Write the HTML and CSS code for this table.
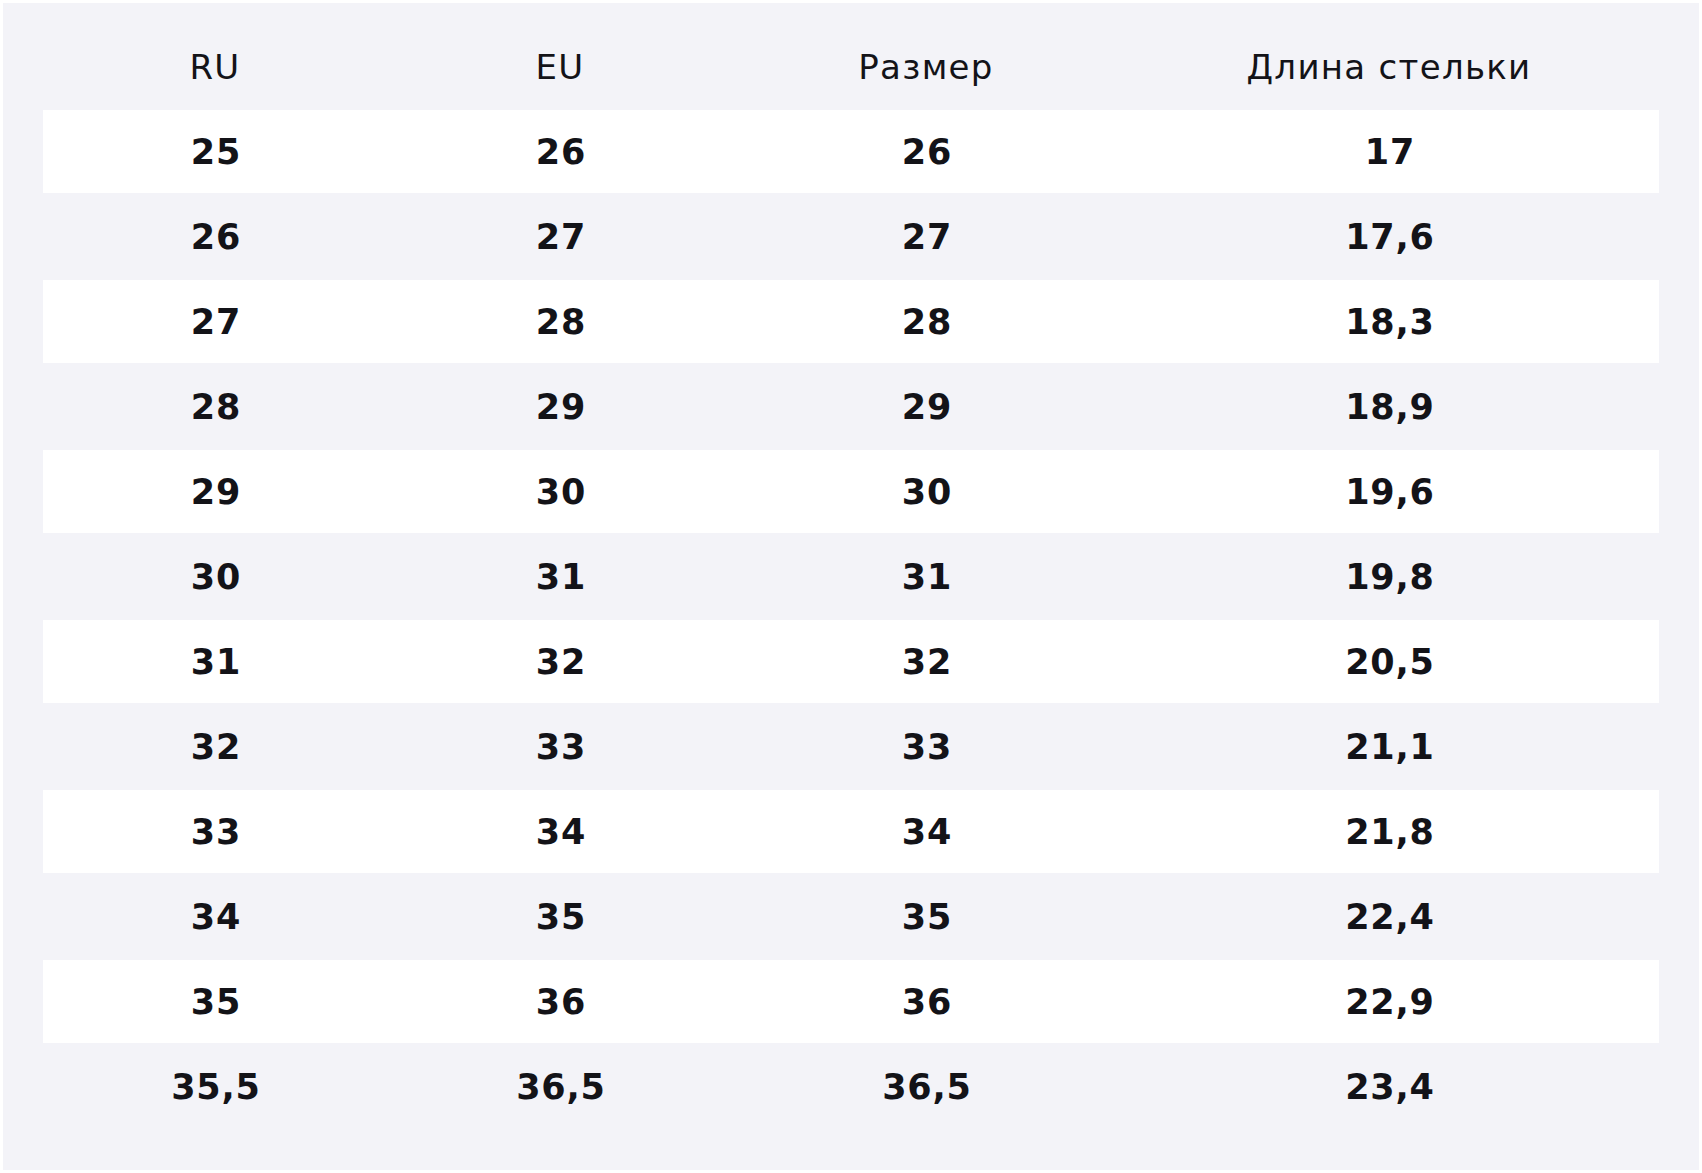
FILE: index.html
```html
<!DOCTYPE html>
<html lang="ru">
<head>
<meta charset="utf-8">
<link rel="stylesheet" href="styles.css">
</head>
<body>
<div class="panel">
  <div class="row head"><div>RU</div><div>EU</div><div>Размер</div><div>Длина стельки</div></div>
  <div class="row white"><div>25</div><div>26</div><div>26</div><div>17</div></div>
  <div class="row gray"><div>26</div><div>27</div><div>27</div><div>17,6</div></div>
  <div class="row white"><div>27</div><div>28</div><div>28</div><div>18,3</div></div>
  <div class="row gray"><div>28</div><div>29</div><div>29</div><div>18,9</div></div>
  <div class="row white"><div>29</div><div>30</div><div>30</div><div>19,6</div></div>
  <div class="row gray"><div>30</div><div>31</div><div>31</div><div>19,8</div></div>
  <div class="row white"><div>31</div><div>32</div><div>32</div><div>20,5</div></div>
  <div class="row gray"><div>32</div><div>33</div><div>33</div><div>21,1</div></div>
  <div class="row white"><div>33</div><div>34</div><div>34</div><div>21,8</div></div>
  <div class="row gray"><div>34</div><div>35</div><div>35</div><div>22,4</div></div>
  <div class="row white"><div>35</div><div>36</div><div>36</div><div>22,9</div></div>
  <div class="row gray"><div>35,5</div><div>36,5</div><div>36,5</div><div>23,4</div></div>
</div>
</body>
</html>
```
FILE: styles.css
```css
html, body {
  margin: 0;
  padding: 0;
  background: #ffffff;
}
body {
  padding: 3px;
  font-family: "DejaVu Sans", sans-serif;
  color: #131318;
}
.panel {
  width: 1696px;
  height: 1167px;
  box-sizing: border-box;
  background: #f3f3f8;
  padding: 20px 40px 40px 40px;
}
.row {
  display: grid;
  grid-template-columns: 344fr 346fr 386fr 540fr;
  align-items: center;
  text-align: center;
  font-size: 35px;
  font-weight: 700;
  letter-spacing: 0.8px;
  height: 87px;
}
.row > div {
  padding-left: 2px;
}
.row.white {
  background: #ffffff;
  height: 83px;
}
.row.head {
  font-size: 34px;
  font-weight: 400;
  letter-spacing: 1.3px;
  height: 87px;
}
.row.head > div {
  padding-left: 0;
}
```
